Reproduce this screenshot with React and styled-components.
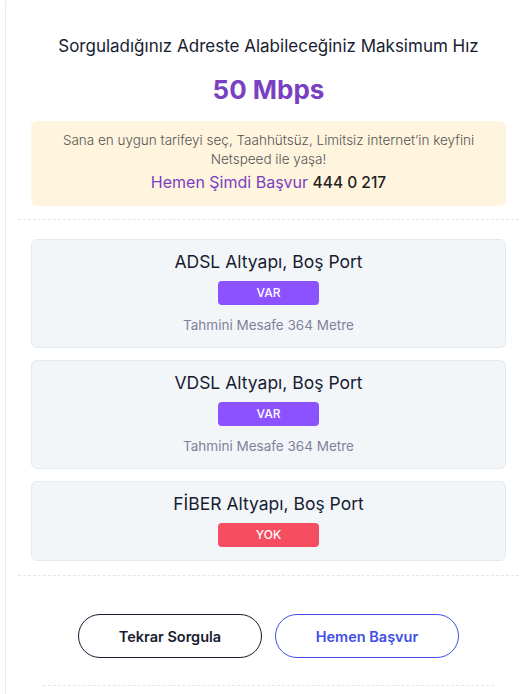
import styled, { createGlobalStyle } from "styled-components";

const GlobalStyle = createGlobalStyle`
  html, body {
    margin: 0;
    padding: 0;
    overflow: hidden;
    background: #ffffff;
  }
  body {
    font-family: Inter, "Open Sans", "DejaVu Sans", sans-serif;
    color: #181c32;
  }
  * {
    box-sizing: border-box;
  }
`;

const infra = [
  { name: "ADSL", available: true, distance: 364 },
  { name: "VDSL", available: true, distance: 364 },
  { name: "FİBER", available: false },
];

export default function App() {
  return (
    <>
      <GlobalStyle />
      <Card>
        <Header>
          <h3>Sorguladığınız Adreste Alabileceğiniz Maksimum Hız</h3>
          <Speed>50 Mbps</Speed>
        </Header>

        <Notice>
          <p>
            Sana en uygun tarifeyi seç, Taahhütsüz, Limitsiz internet’in keyfini
            <br />
            Netspeed ile yaşa!
          </p>
          <Call>
            <span>Hemen Şimdi Başvur</span> <strong>444 0 217</strong>
          </Call>
        </Notice>

        <Divider />

        <List>
          {infra.map((item) => (
            <Result key={item.name}>
              <h4>{item.name} Altyapı, Boş Port</h4>
              <Badge $available={item.available}>
                {item.available ? "VAR" : "YOK"}
              </Badge>
              {item.distance && (
                <Distance>Tahmini Mesafe {item.distance} Metre</Distance>
              )}
            </Result>
          ))}
        </List>

        <Divider $bottom />

        <Actions>
          <Button>Tekrar Sorgula</Button>
          <Button $primary>Hemen Başvur</Button>
        </Actions>

        <Divider $inset />
      </Card>
    </>
  );
}

const Card = styled.div`
  width: 527px;
  margin: -8px 0 0 5px;
  padding: 0 25px;
  border: 1px solid #ebebeb;
  border-radius: 12px;
  background: #fff;
  height: 720px;
`;

const Header = styled.div`
  text-align: center;
  padding-top: 42px;

  h3 {
    margin: 0;
    font-size: 17px;
    font-weight: 400;
    line-height: 22px;
    color: #181c32;
  }
`;

const Speed = styled.div`
  margin-top: 16px;
  font-size: 26px;
  font-weight: 700;
  line-height: 34px;
  color: #7b3fc1;
`;

const Notice = styled.div`
  margin-top: 14px;
  background: #fff4de;
  border-radius: 6px;
  padding: 10px 14px 13px;
  text-align: center;

  p {
    margin: 0;
    font-size: 13.5px;
    font-weight: 300;
    line-height: 18.5px;
    color: #555;
  }
`;

const Call = styled.div`
  margin-top: 4px;
  line-height: 21px;

  span {
    font-size: 16px;
    color: #7b3fc1;
  }
  strong {
    font-size: 15.5px;
    font-weight: 500;
    color: #222;
  }
`;

const Divider = styled.div`
  border-top: 1px dashed #e6e6e6;
  margin: ${(p) =>
    p.$inset ? "27px 12px 0" : p.$bottom ? "14px -13px 0" : "13px -13px 0"};
`;

const List = styled.div`
  display: flex;
  flex-direction: column;
  gap: 12px;
  margin-top: 19px;
`;

const Result = styled.div`
  display: flex;
  flex-direction: column;
  align-items: center;
  padding: 10px 20px 13px;
  background: #f3f6f9;
  border: 1px solid #e6e9ed;
  border-radius: 6px;

  h4 {
    margin: 0;
    font-size: 17.5px;
    font-weight: 400;
    line-height: 24px;
    color: #181c32;
  }
`;

const Badge = styled.div`
  margin-top: 7px;
  width: 101px;
  height: 24px;
  border-radius: 4px;
  background: ${(p) => (p.$available ? "#8c52ff" : "#f64e60")};
  color: #fff;
  font-size: 12px;
  font-weight: 500;
  line-height: 24px;
  text-align: center;
`;

const Distance = styled.div`
  margin-top: 11px;
  font-size: 13.5px;
  line-height: 18px;
  color: #7e8299;
`;

const Actions = styled.div`
  display: flex;
  justify-content: center;
  gap: 13px;
  margin-top: 38px;
`;

const Button = styled.button`
  width: 184px;
  height: 44px;
  border-radius: 22px;
  background: #fff;
  border: 1px solid ${(p) => (p.$primary ? "#3f4ee8" : "#181c32")};
  color: ${(p) => (p.$primary ? "#3f4ee8" : "#181c32")};
  font-family: inherit;
  font-size: 14.5px;
  font-weight: 600;
  cursor: pointer;
`;
